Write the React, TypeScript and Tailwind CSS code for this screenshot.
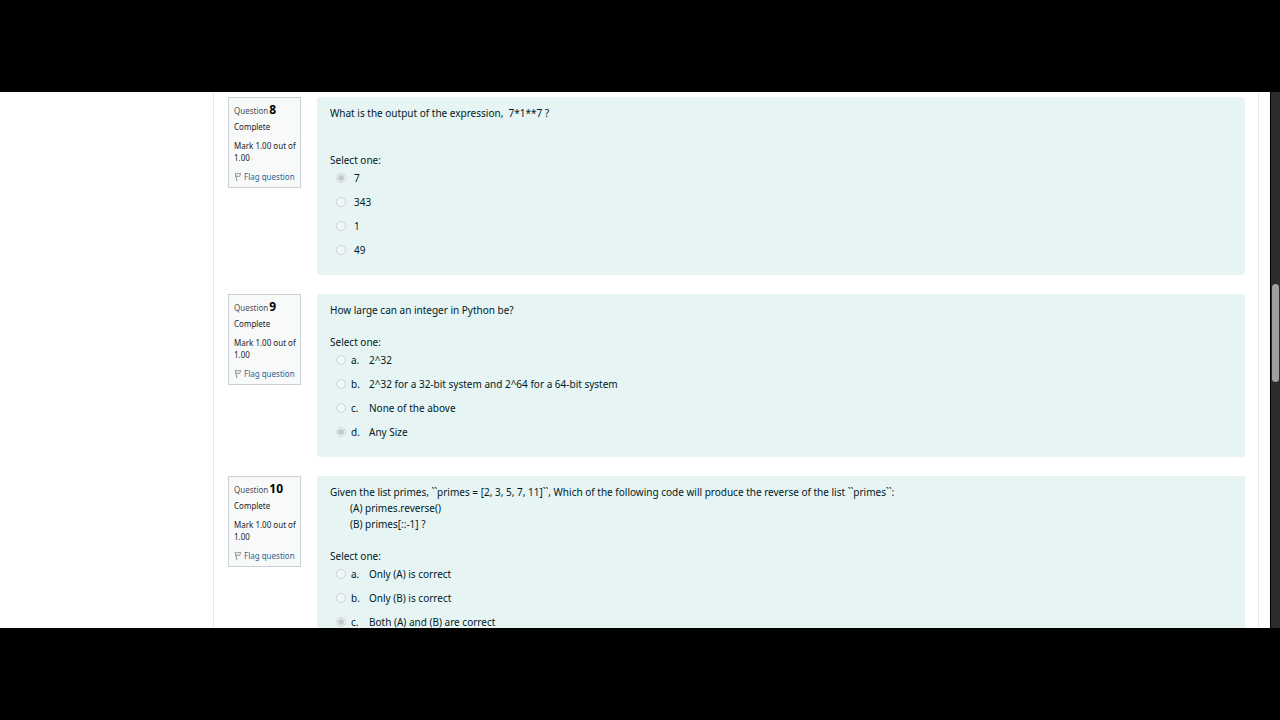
type Option = { letter?: string; text: string };
type Question = {
  number: number;
  lines: string[];
  spaced?: boolean;
  options: Option[];
  chosen: number;
};

const questions: Question[] = [
  {
    number: 8,
    lines: ["What is the output of the expression,\u00a0 7*1**7 ?"],
    spaced: true,
    options: [{ text: "7" }, { text: "343" }, { text: "1" }, { text: "49" }],
    chosen: 0,
  },
  {
    number: 9,
    lines: ["How large can an integer in Python be?"],
    options: [
      { letter: "a.", text: "2^32" },
      { letter: "b.", text: "2^32 for a 32-bit system and 2^64 for a 64-bit system" },
      { letter: "c.", text: "None of the above" },
      { letter: "d.", text: "Any Size" },
    ],
    chosen: 3,
  },
  {
    number: 10,
    lines: [
      "Given the list primes, ``primes = [2, 3, 5, 7, 11]``, Which of the following code will produce the reverse of the list ``primes``:",
      "(A) primes.reverse()",
      "(B) primes[::-1] ?",
    ],
    options: [
      { letter: "a.", text: "Only (A) is correct" },
      { letter: "b.", text: "Only (B) is correct" },
      { letter: "c.", text: "Both (A) and (B) are correct" },
    ],
    chosen: 2,
  },
];

function FlagIcon() {
  return (
    <svg viewBox="0 0 8 10" className="h-[10px] w-2 shrink-0" fill="none" aria-hidden="true">
      <path d="M1.2 1.2 L3 9.2" stroke="#8a8f92" strokeWidth="1" />
      <path d="M1.3 1.6 C3 .8 4 2 6.8 1.3 L5.8 4.3 C4.4 4.9 3.4 4 2 4.8 Z" stroke="#8a8f92" strokeWidth=".8" fill="#e3e6e7" />
    </svg>
  );
}

function Info({ number }: { number: number }) {
  return (
    <aside className="w-[73px] shrink-0 border border-[#cad0d7] bg-[#f8fafa] pt-1 pr-[2px] pb-1 pl-[5px] text-[8px] leading-[12px] text-[#1d2125]">
      <h3 className="flex h-4 items-baseline gap-px leading-4 text-[#495057]">
        Question <span className="text-[12px] font-bold text-black">{number}</span>
      </h3>
      <p className="mt-[3px]">Complete</p>
      <p className="mt-[7px]">Mark 1.00 out of 1.00</p>
      <a href="#flag" className="mt-[7px] flex items-center gap-[2px] whitespace-nowrap text-[#2a6496]">
        <FlagIcon />
        Flag question
      </a>
    </aside>
  );
}

function QuestionBlock({ q }: { q: Question }) {
  return (
    <section className="flex items-start gap-4">
      <Info number={q.number} />
      <div className="min-w-0 flex-1 rounded-[3px] bg-[#e7f4f4] px-[13px] pt-2 pb-[17px] text-[10px] leading-4 text-[#001a1e]">
        {q.lines.map((line, i) => (
          <p key={line} className={i > 0 ? "pl-5" : ""}>
            {line}
          </p>
        ))}
        <fieldset className={q.spaced ? "pt-[31px]" : "pt-4"}>
          <legend className="float-left w-full">Select one:</legend>
          <div className="clear-both flex flex-col gap-2 pt-[2px] pl-[6px]">
            {q.options.map((o, i) => (
              <label key={o.text} className="flex items-center">
                <input
                  type="radio"
                  name={`q${q.number}`}
                  defaultChecked={i === q.chosen}
                  disabled
                  className="mr-[5px] grid size-[10px] shrink-0 appearance-none place-items-center rounded-full border border-[#cdd3d5] bg-[#f1f7f8] before:size-[6px] before:rounded-full checked:before:bg-[#c3c8ca]"
                />
                {o.letter ? <span className="w-[18px]">{o.letter}</span> : <span className="w-[3px]" />}
                <span>{o.text}</span>
              </label>
            ))}
          </div>
        </fieldset>
      </div>
    </section>
  );
}

export default function App() {
  return (
    <div className="flex h-screen flex-col bg-black py-[92px] font-['Noto_Sans','Open_Sans',sans-serif]">
      <div className="flex min-h-0 flex-1 overflow-hidden bg-white">
        <main className="ml-[213px] mr-[11px] flex min-w-0 flex-1 flex-col gap-[19px] border-x border-[#e6e8ea] pt-[5px] pr-[13px] pl-[14px]">
          {questions.map((q) => (
            <QuestionBlock key={q.number} q={q} />
          ))}
        </main>
        <div className="flex w-[10px] shrink-0 flex-col items-center border-l border-black bg-[#2c2c2c] pt-[192px]">
          <div className="h-[98px] w-[7px] rounded-full bg-[#9f9f9f]" />
        </div>
      </div>
    </div>
  );
}
